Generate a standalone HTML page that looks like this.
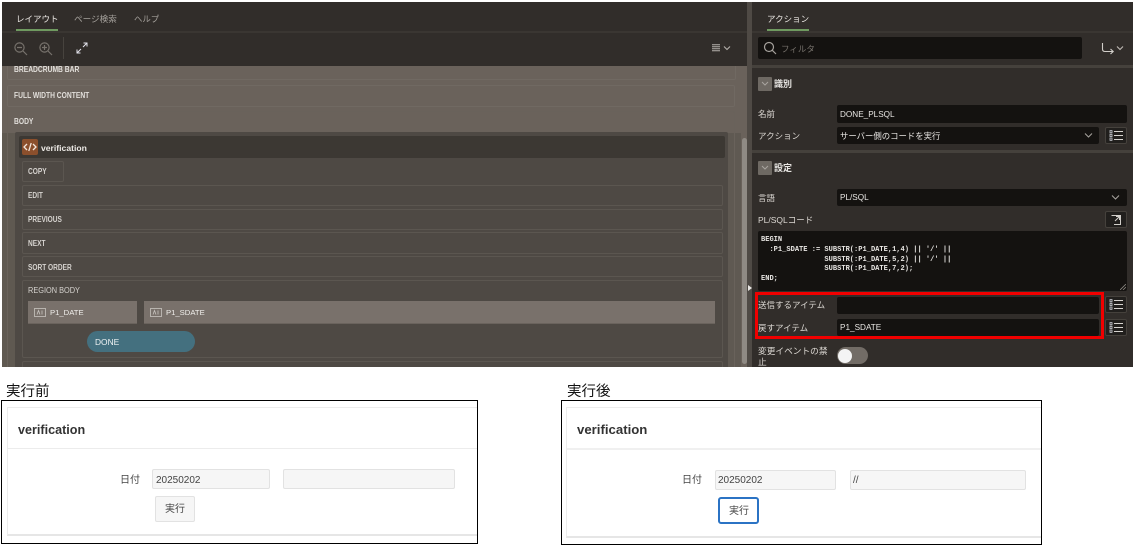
<!DOCTYPE html>
<html lang="ja"><head><meta charset="utf-8"><title>APEX</title>
<style>
html,body{margin:0;padding:0;background:#fff}
#p{position:relative;width:1135px;height:549px;overflow:hidden;background:#fff;font-family:"Liberation Sans","Noto Sans CJK JP",sans-serif}
#p div,#p svg{position:absolute;box-sizing:border-box}
.t{white-space:nowrap;line-height:14px;height:14px}
.cap{font-size:8px;font-weight:bold;color:#e2dfdb;transform:scaleX(.84);transform-origin:0 50%}
.cap2{font-size:8px;color:#d6d3cf;transform-origin:0 50%}
.box{border:1px solid #5d5750;border-radius:2px}
.in{background:#141210;border-radius:2px}
.lbl{font-size:8.5px;color:#ddd9d4}
.val{font-size:8.2px;color:#e8e6e3}
.sec{width:14px;height:14px;background:#6e6963;border-radius:1px}
.lb{width:22px;height:17px;background:#211f1d;border:1px solid #45413c;border-radius:2px}
.code{font-family:"Liberation Mono","DejaVu Sans Mono",monospace;font-size:7.05px;color:#e8e6e3;font-weight:bold;white-space:pre;line-height:9.8px}
.web{color:#444;font-size:10px}
.fld{background:#f6f6f6;border:1px solid #e2e2e2;border-radius:2px}
</style></head><body><div id="p">

<!-- dark app frame -->
<div style="left:2px;top:2px;width:1131px;height:365px;background:#312d2a"></div>
<div style="left:2px;top:30.5px;width:746px;height:2px;background:#3a3632"></div>
<div style="left:752px;top:30.5px;width:381px;height:2px;background:#3a3632"></div>

<!-- clipped left canvas -->
<div style="left:2px;top:66px;width:746px;height:301px;overflow:hidden;background:#5f5951">
<div style="left:-2px;top:-66px;width:1135px;height:549px">
<div style="left:2px;top:66px;width:739px;height:67px;background:#6a625b"></div>
<div style="left:741px;top:66px;width:7px;height:301px;background:#6a625b"></div>
<div style="left:728px;top:133px;width:13px;height:234px;background:#5f5952"></div>

<div class="box" style="left:7px;top:60px;width:729px;height:19.5px;border-color:#706962"></div>
<div class="t cap" style="left:14px;top:63px">BREADCRUMB BAR</div>
<div class="box" style="left:7px;top:85px;width:728px;height:22px;border-color:#706962"></div>
<div class="t cap" style="left:14px;top:89px">FULL WIDTH CONTENT</div>
<div class="box" style="left:7px;top:111px;width:728px;height:262px;border-color:#69625b"></div>
<div class="t cap" style="left:14px;top:115px">BODY</div>

<div style="left:15px;top:132px;width:713px;height:240px;background:#4e4944;border-radius:2px"></div>
<div style="left:19px;top:136px;width:706px;height:22px;background:#3c3833;border-radius:2px"></div>
<div style="left:22px;top:139px;width:16px;height:16px;background:#8b4f2c;border-radius:2px"></div>
<svg style="left:23px;top:142px" width="14" height="10" viewBox="0 0 14 10" fill="none" stroke="#f2e6dc" stroke-width="1.3"><path d="M4 2L1 5l3 3M10 2l3 3-3 3M8.2 1L5.8 9"/></svg>
<div class="t" style="left:41px;top:141px;font-size:8.6px;font-weight:bold;color:#ece9e5">verification</div>

<div class="box" style="left:21.5px;top:161px;width:42px;height:21px;border-color:#5b5650"></div>
<div class="t cap2" style="left:28px;top:165px;font-weight:bold;transform:scaleX(.82)">COPY</div>
<div class="box" style="left:21.5px;top:185px;width:701px;height:21px;border-color:#5b5650"></div>
<div class="t cap2" style="left:28px;top:189px;font-weight:bold;transform:scaleX(.82)">EDIT</div>
<div class="box" style="left:21.5px;top:209px;width:701px;height:21px;border-color:#5b5650"></div>
<div class="t cap2" style="left:28px;top:213px;font-weight:bold;transform:scaleX(.82)">PREVIOUS</div>
<div class="box" style="left:21.5px;top:232px;width:701px;height:22px;border-color:#5b5650"></div>
<div class="t cap2" style="left:28px;top:237px;font-weight:bold;transform:scaleX(.82)">NEXT</div>
<div class="box" style="left:21.5px;top:256px;width:701px;height:21px;border-color:#5b5650"></div>
<div class="t cap2" style="left:28px;top:261px;font-weight:bold;transform:scaleX(.82)">SORT ORDER</div>
<div class="box" style="left:21.5px;top:280px;width:701px;height:78px;border-color:#5b5650"></div>
<div class="t cap2" style="left:28px;top:284px;transform:scaleX(.92)">REGION BODY</div>
<div class="box" style="left:21.5px;top:361px;width:701px;height:12px;border-color:#5b5650"></div>

<div style="left:28px;top:301px;width:109px;height:23px;background:#79716b;border-bottom:1px solid #6a635d"></div>
<div style="left:144px;top:301px;width:571px;height:23px;background:#79716b;border-bottom:1px solid #6a635d"></div>
<svg style="left:34px;top:308px" width="12" height="9" viewBox="0 0 12 9" fill="none" stroke="#c9c5c0" stroke-width=".8"><rect x=".5" y=".5" width="11" height="8"/><path d="M3 6.5L4.5 2.5 6 6.5M8 2.5v4"/></svg>
<svg style="left:150px;top:308px" width="12" height="9" viewBox="0 0 12 9" fill="none" stroke="#c9c5c0" stroke-width=".8"><rect x=".5" y=".5" width="11" height="8"/><path d="M3 6.5L4.5 2.5 6 6.5M8 2.5v4"/></svg>
<div class="t" style="left:50px;top:306px;font-size:7.7px;color:#f0eeeb">P1_DATE</div>
<div class="t" style="left:166px;top:306px;font-size:7.7px;color:#f0eeeb">P1_SDATE</div>
<div style="left:87px;top:331px;width:108px;height:21px;border-radius:11px;background:#44707f"></div>
<div class="t" style="left:95px;top:335px;font-size:8.4px;color:#eef2f3">DONE</div>
<div style="left:741.5px;top:138px;width:5px;height:226px;background:#8f8a84;border-radius:3px"></div>
</div></div>

<div style="left:747px;top:2px;width:5px;height:365px;background:#4f4a45"></div>
<svg style="left:748px;top:285px" width="4" height="6" viewBox="0 0 4 6"><path d="M0 0l4 3-4 3z" fill="#e8e6e3"/></svg>

<!-- tabs left -->
<div class="t" style="left:16px;top:11.5px;font-size:8.5px;color:#ece9e5">レイアウト</div>
<div style="left:16px;top:29px;width:42px;height:2px;background:#6f9a60"></div>
<div class="t" style="left:74px;top:11.5px;font-size:8.6px;color:#a5a19c">ページ検索</div>
<div class="t" style="left:134px;top:11.5px;font-size:8.4px;color:#a5a19c">ヘルプ</div>

<!-- toolbar icons -->
<svg style="left:13px;top:41px" width="16" height="16" viewBox="0 0 16 16" fill="none" stroke="#77726c" stroke-width="1.2"><circle cx="6.5" cy="6.5" r="4.6"/><path d="M4 6.5h5M10 10l4 4"/></svg>
<svg style="left:38px;top:41px" width="16" height="16" viewBox="0 0 16 16" fill="none" stroke="#77726c" stroke-width="1.2"><circle cx="6.5" cy="6.5" r="4.6"/><path d="M4 6.5h5M6.5 4v5M10 10l4 4"/></svg>
<div style="left:63px;top:37px;width:1px;height:22px;background:#47433e"></div>
<svg style="left:76px;top:42px" width="12" height="12" viewBox="0 0 12 12" fill="none" stroke="#e4e4ec" stroke-width="1"><path d="M1 11l4-4M1 7.5V11h3.5M11 1L7 5M7.5 1H11v3.5"/></svg>
<svg style="left:711px;top:44px" width="10" height="9" viewBox="0 0 10 9" fill="none" stroke="#b5b1ac" stroke-width="1"><path d="M1 .8h8M1 2.8h8M1 4.8h8M1 6.8h8"/></svg>
<svg style="left:723px;top:45px" width="8" height="7" viewBox="0 0 8 7" fill="none" stroke="#b5b1ac" stroke-width="1.1"><path d="M1 1.5l3 3 3-3"/></svg>

<!-- right panel -->
<div class="t" style="left:767px;top:11.5px;font-size:8.5px;color:#ece9e5">アクション</div>
<div style="left:767px;top:29px;width:42px;height:2px;background:#6f9a60"></div>
<div class="in" style="left:758px;top:37px;width:324px;height:22px"></div>
<svg style="left:763px;top:41px" width="14" height="14" viewBox="0 0 14 14" fill="none" stroke="#a5a19c" stroke-width="1.2"><circle cx="6" cy="6" r="4.5"/><path d="M9.3 9.3l3.7 3.7"/></svg>
<div class="t" style="left:781px;top:41.5px;font-size:8.5px;color:#77726c">フィルタ</div>
<svg style="left:1101px;top:41px" width="14" height="14" viewBox="0 0 14 14" fill="none" stroke="#d2cfca" stroke-width="1.1"><path d="M1.5 2v6q0 2.5 2.5 2.5h8M9.5 8l2.700 2.500-2.700 2.500"/></svg>
<svg style="left:1116px;top:45px" width="8" height="7" viewBox="0 0 8 7" fill="none" stroke="#c0bcb7" stroke-width="1.1"><path d="M1 1.5l3 3 3-3"/></svg>

<div style="left:752px;top:65px;width:381px;height:3px;background:#45413c"></div>
<div class="sec" style="left:758px;top:77px"></div>
<svg style="left:761px;top:81px" width="8" height="6" viewBox="0 0 8 6" fill="none" stroke="#a8a49f" stroke-width="1"><path d="M1 1l3 3 3-3"/></svg>
<div class="t" style="left:774px;top:77px;font-size:9px;font-weight:bold;color:#e8e6e3">識別</div>

<div class="t lbl" style="left:758px;top:107px">名前</div>
<div class="in" style="left:837px;top:105px;width:290px;height:18px"></div>
<div class="t val" style="left:840px;top:107.5px">DONE_PLSQL</div>
<div class="t lbl" style="left:758px;top:129px">アクション</div>
<div class="in" style="left:837px;top:127px;width:262px;height:17px"></div>
<div class="t val" style="left:840px;top:129px;font-size:8.4px">サーバー側のコードを実行</div>
<svg style="left:1084px;top:132px" width="9" height="7" viewBox="0 0 9 7" fill="none" stroke="#a8a49f" stroke-width="1"><path d="M1 1.5l3.5 3.5 3.5-3.5"/></svg>
<div class="lb" style="left:1105px;top:127px"></div>
<svg style="left:1109px;top:130px" width="15" height="11" viewBox="0 0 15 11" fill="none"><path d="M1 .5h2v2.3H1zM1 4.300h2v2.300H1zM1 8h2v2.300H1z" stroke="#c9cbd2" stroke-width=".8"/><path d="M5 1.5h9M5 5.5h9M5 9.5h9" stroke="#d6d3cf" stroke-width="1"/></svg>

<div style="left:752px;top:150px;width:381px;height:2.5px;background:#45413c"></div>
<div class="sec" style="left:758px;top:161px"></div>
<svg style="left:761px;top:165px" width="8" height="6" viewBox="0 0 8 6" fill="none" stroke="#a8a49f" stroke-width="1"><path d="M1 1l3 3 3-3"/></svg>
<div class="t" style="left:774px;top:161px;font-size:9px;font-weight:bold;color:#e8e6e3">設定</div>

<div class="t lbl" style="left:758px;top:191px">言語</div>
<div class="in" style="left:837px;top:189px;width:290px;height:17px"></div>
<div class="t val" style="left:840px;top:191px">PL/SQL</div>
<svg style="left:1111px;top:194px" width="9" height="7" viewBox="0 0 9 7" fill="none" stroke="#a8a49f" stroke-width="1"><path d="M1 1.5l3.5 3.5 3.5-3.5"/></svg>

<div class="t lbl" style="left:758px;top:213px">PL/SQLコード</div>
<div class="lb" style="left:1105px;top:211px"></div>
<svg style="left:1110px;top:214px" width="12" height="12" viewBox="0 0 12 12" fill="none" stroke="#d2cfca" stroke-width="1"><path d="M1.5 1.5h9v9H4M5 7l4.5-4.500M6 2.500h3.500V6"/></svg>

<div class="in" style="left:758px;top:231px;width:369px;height:60px"></div>
<div class="code" style="left:761px;top:236px">BEGIN
  :P1_SDATE := SUBSTR(:P1_DATE,1,4) || '/' ||
               SUBSTR(:P1_DATE,5,2) || '/' ||
               SUBSTR(:P1_DATE,7,2);
END;</div>
<svg style="left:1120px;top:284px" width="6" height="6" viewBox="0 0 6 6" fill="none" stroke="#8a8680" stroke-width=".8"><path d="M0 6l6-6M3 6l3-3"/></svg>

<div class="t lbl" style="left:758px;top:298px">送信するアイテム</div>
<div class="in" style="left:837px;top:297px;width:262px;height:17px"></div>
<div class="lb" style="left:1105px;top:296px"></div>
<svg style="left:1109px;top:299px" width="15" height="11" viewBox="0 0 15 11" fill="none"><path d="M1 .5h2v2.3H1zM1 4.300h2v2.300H1zM1 8h2v2.300H1z" stroke="#c9cbd2" stroke-width=".8"/><path d="M5 1.5h9M5 5.5h9M5 9.5h9" stroke="#d6d3cf" stroke-width="1"/></svg>
<div class="t lbl" style="left:758px;top:321px">戻すアイテム</div>
<div class="in" style="left:837px;top:319px;width:262px;height:17px"></div>
<div class="t val" style="left:840px;top:321px">P1_SDATE</div>
<div class="lb" style="left:1105px;top:319px"></div>
<svg style="left:1109px;top:322px" width="15" height="11" viewBox="0 0 15 11" fill="none"><path d="M1 .5h2v2.3H1zM1 4.300h2v2.300H1zM1 8h2v2.300H1z" stroke="#c9cbd2" stroke-width=".8"/><path d="M5 1.5h9M5 5.5h9M5 9.500h9" stroke="#d6d3cf" stroke-width="1"/></svg>
<div style="left:755px;top:292px;width:349px;height:47px;border:3px solid #f00000"></div>

<div class="t lbl" style="left:758px;top:344px;font-size:8.7px">変更イベントの禁</div>
<div class="t lbl" style="left:758px;top:355px;font-size:8.7px">止</div>
<div style="left:837px;top:347px;width:31px;height:17px;border-radius:9px;background:#726c66"></div>
<div style="left:838px;top:349px;width:14px;height:14px;border-radius:7px;background:#f4f4f4"></div>

<!-- before -->
<div class="t" style="left:6px;top:384px;font-size:14.5px;line-height:16px;height:16px;color:#111">実行前</div>
<div style="left:1px;top:400px;width:477px;height:144px;border:1px solid #000;background:#fff"></div>
<div style="left:7px;top:407px;width:470px;height:129px;border:1px solid #ececec;border-right:0;border-bottom:2px solid #e6e6e6"></div>
<div class="t" style="left:18px;top:421.5px;font-size:12.6px;font-weight:bold;color:#333;height:16px;line-height:16px">verification</div>
<div style="left:8px;top:448px;width:469px;height:1px;background:#ececec"></div>
<div class="t web" style="left:120px;top:474px">日付</div>
<div class="fld" style="left:152px;top:469px;width:118px;height:20px"></div>
<div class="t web" style="left:156px;top:474px">20250202</div>
<div class="fld" style="left:283px;top:469px;width:172px;height:20px"></div>
<div class="fld" style="left:155px;top:496px;width:40px;height:26px"></div>
<div class="t web" style="left:165px;top:503px">実行</div>

<!-- after -->
<div class="t" style="left:567px;top:384px;font-size:14.5px;line-height:16px;height:16px;color:#111">実行後</div>
<div style="left:561px;top:400px;width:481px;height:145px;border:1px solid #000;background:#fff"></div>
<div style="left:566px;top:407px;width:475px;height:131px;border:1px solid #ececec;border-right:0;border-bottom:2px solid #e6e6e6"></div>
<div class="t" style="left:577px;top:421.5px;font-size:13.2px;font-weight:bold;color:#333;height:16px;line-height:16px">verification</div>
<div style="left:567px;top:448px;width:474px;height:2px;background:#f0f0f0"></div>
<div class="t web" style="left:682px;top:474px">日付</div>
<div class="fld" style="left:715px;top:470px;width:121px;height:20px"></div>
<div class="t web" style="left:718px;top:474px">20250202</div>
<div class="fld" style="left:850px;top:470px;width:176px;height:20px"></div>
<div class="t web" style="left:853px;top:474px">//</div>
<div style="left:718px;top:497px;width:41px;height:27px;background:#fff;border:2px solid #2b73c4;border-radius:3px"></div>
<div class="t web" style="left:729px;top:505px">実行</div>
</div></body></html>
